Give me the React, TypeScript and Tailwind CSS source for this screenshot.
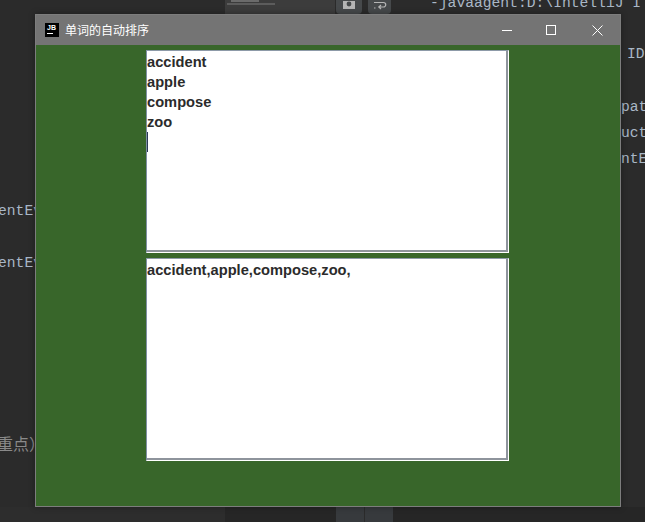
const mono = "font-['Liberation_Mono',monospace] text-[14.67px] leading-none text-[#a9b7c6] whitespace-pre";

// code text of the IDE sitting behind the window
function BackdropText({ className, children }: { className: string; children: string }) {
  return <span className={`absolute ${mono} ${className}`}>{children}</span>;
}

function WordBox({ children }: { children: React.ReactNode }) {
  return (
    <div className="h-[203px] w-[363px] border border-t-[#8d9aa8] border-l-[#7f8fa3] border-r-white border-b-white bg-white">
      <div className="h-full border-r-2 border-b-2 border-r-[#8e949c] border-b-[#8e949c] pt-px font-['Liberation_Sans',sans-serif] text-[14.67px] leading-5 font-bold text-[#2b2b2b]">
        {children}
      </div>
    </div>
  );
}

export default function App() {
  return (
    <div className="relative h-[522px] w-[645px] overflow-hidden bg-[#2b2b2b]">
      {/* toolbar remains at the top */}
      <div className="absolute top-0 left-[225px] h-[14px] w-[110px] bg-[#3c3c3c]">
        <div className="ml-[6px] h-[2px] w-[28px] bg-[#6b6b6b]" />
        <div className="mt-[1px] ml-[2px] h-[2px] w-[48px] bg-[#5c5c5c]" />
      </div>
      <div className="absolute top-0 left-[336px] flex h-[14px] w-[26px] items-center justify-center rounded-b-sm bg-[#46494b]">
        <svg width="14" height="12" viewBox="0 0 14 12">
          <path d="M1 0h12v8H1z" fill="#b5b5b5" />
          <circle cx="7" cy="3" r="2.4" fill="#46494b" />
        </svg>
      </div>
      <div className="absolute top-0 left-[368px] flex h-[14px] w-[23px] items-center justify-center rounded-b-sm bg-[#46494b]">
        <svg width="16" height="12" viewBox="0 0 16 12" fill="none" stroke="#b5b5b5" strokeWidth="1.2">
          <path d="M2 1.5h9.5a2.2 2.2 0 0 1 0 4.5H7M9 4 6.8 6 9 8" />
          <path d="M2 7h2" strokeDasharray="1.5 1" />
        </svg>
      </div>

      <BackdropText className="top-[-4px] left-[430px]">-javaagent:D:\IntelliJ I</BackdropText>
      <BackdropText className="top-[47px] left-[627px]">ID</BackdropText>
      <BackdropText className="top-[100px] left-[621px]">pat</BackdropText>
      <BackdropText className="top-[126px] left-[621px]">uct</BackdropText>
      <BackdropText className="top-[152px] left-[621px]">ntE</BackdropText>
      <BackdropText className="top-[204px] left-[-2px]">entEv</BackdropText>
      <BackdropText className="top-[256px] left-[-2px]">entEv</BackdropText>
      <span className="absolute top-[433px] left-[-3px] font-['Noto_Sans_CJK_SC',sans-serif] text-base leading-5 whitespace-pre text-[#8a8a8a]">
        重点）
      </span>

      {/* bottom strip */}
      <div className="absolute top-[507px] left-0 flex h-[15px] w-[645px]">
        <div className="h-full w-[225px] bg-[#2d2d2d]" />
        <div className="h-full w-[111px] bg-[#262626]" />
        <div className="h-full w-[28px] bg-[#373a3d]" />
        <div className="ml-px h-full w-[28px] bg-[#373a3d]" />
        <div className="h-full flex-1 bg-[#262626]" />
      </div>

      {/* the Java window */}
      <div className="absolute top-[14px] left-[35px] flex h-[493px] w-[586px] flex-col border border-[#7d7d7d] shadow-[0_0_6px_rgba(0,0,0,0.35)]">
        <div className="flex h-[30px] shrink-0 items-center bg-[#747474]">
          <div className="ml-[9px] flex h-[14px] w-[14px] flex-col bg-black px-[2px] pt-px font-['Liberation_Sans',sans-serif] text-[7px] leading-[8px] font-bold text-white">
            JB
            <div className="mt-px h-px w-[6px] bg-white" />
          </div>
          <span className="ml-[6px] font-['Noto_Sans_CJK_SC',sans-serif] text-xs text-white">单词的自动排序</span>
          <div className="ml-auto flex h-full items-center">
            <svg className="mr-[34px]" width="10" height="10" viewBox="0 0 10 10" stroke="#fff" fill="none">
              <path d="M0 5.5h10" />
            </svg>
            <svg className="mr-[36px]" width="10" height="10" viewBox="0 0 10 10" stroke="#fff" fill="none">
              <rect x="0.5" y="0.5" width="9" height="9" />
            </svg>
            <svg className="mr-[17px]" width="11" height="11" viewBox="0 0 11 11" stroke="#fff" fill="none">
              <path d="M0.5 0.5l10 10M10.5 0.5l-10 10" />
            </svg>
          </div>
        </div>
        <div className="flex flex-1 flex-col items-start bg-[#38662a] pt-[5px] pl-[110px]">
          <div className="flex flex-col gap-[5px]">
            <WordBox>
              <div>accident</div>
              <div>apple</div>
              <div>compose</div>
              <div>zoo</div>
              <div className="h-5 w-px bg-[#2b3a55]" />
            </WordBox>
            <WordBox>accident,apple,compose,zoo,</WordBox>
          </div>
        </div>
      </div>
    </div>
  );
}
